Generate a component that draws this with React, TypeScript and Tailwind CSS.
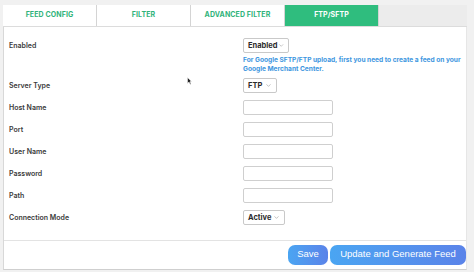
import { ChevronDown } from 'lucide-react';

const tabs = ['FEED CONFIG', 'FILTER', 'ADVANCED FILTER', 'FTP/SFTP'];

function Select({ value, width }: { value: string; width: string }) {
  return (
    <div
      className={`${width} h-[15px] flex items-center justify-between px-[4px] border border-[#c9c9c9] rounded-[2px] bg-white text-[7.5px] font-bold text-[#2c2c2c]`}
    >
      <span>{value}</span>
      <ChevronDown size={7} strokeWidth={1.5} className="text-[#777]" />
    </div>
  );
}

function Input() {
  return <div className="w-[90px] h-[15px] border border-[#cfcfcf] rounded-[2px] bg-white" />;
}

function Row({ label, children }: { label: string; children: React.ReactNode }) {
  return (
    <div className="flex h-[22px]">
      <div className="w-[239px] shrink-0 pl-[5px] pt-[4px] text-[7px] font-semibold text-[#3a3a3a]">{label}</div>
      <div className="pt-[1px]">{children}</div>
    </div>
  );
}

export default function App() {
  return (
    <div
      className="w-[474px] h-[272px] bg-[#f1f1f1] pt-[5px] pl-[3px] pr-[7px] relative"
      style={{ fontFamily: 'Inter, "Liberation Sans", sans-serif' }}
    >
      <div className="flex h-[22px] border-b border-[#dcdcdc]">
        {tabs.map((t, i) => (
          <div
            key={t}
            className={`w-[94px] flex items-center justify-center text-[7px] font-bold tracking-[0.1px] border-r border-[#d4d4d4] ${
              i === 3 ? 'bg-[#2fbd7e] text-white' : 'bg-white text-[#2fb37a]'
            }`}
          >
            {t}
          </div>
        ))}
        <div className="flex-1 bg-[#ececec]" />
      </div>

      <div className="bg-white border-l border-[#d8d8d8] border-r border-r-[#e6e6e6] border-b border-b-[#cfcfcf] h-[243px] flex flex-col">
        <div className="pt-[11px]">
          <div className="flex">
            <div className="w-[239px] shrink-0 pl-[5px] pt-[3px] text-[7px] font-semibold text-[#3a3a3a]">Enabled</div>
            <div>
              <Select value="Enabled" width="w-[46px]" />
              <div className="mt-[3px] text-[6.6px] leading-[9px] font-bold text-[#3d96e0] w-[222px]">
                For Google SFTP/FTP upload, first you need to create a feed on your Google Merchant Center.
              </div>
            </div>
          </div>
          <div className="h-[3px]" />
          <Row label="Server Type">
            <Select value="FTP" width="w-[34px]" />
          </Row>
          <Row label="Host Name">
            <Input />
          </Row>
          <Row label="Port">
            <Input />
          </Row>
          <Row label="User Name">
            <Input />
          </Row>
          <Row label="Password">
            <Input />
          </Row>
          <Row label="Path">
            <Input />
          </Row>
          <Row label="Connection Mode">
            <Select value="Active" width="w-[42px]" />
          </Row>
        </div>

        <div className="mt-auto border-t border-[#e3e3e3] h-[29px] flex items-center justify-end gap-[2px] pb-[1px]">
          <button className="h-[20px] w-[40px] rounded-[7px] bg-gradient-to-r from-[#4aa5f2] to-[#5a83e9] text-white text-[9.5px]" style={{ fontFamily: '"Liberation Sans", sans-serif' }}>
            Save
          </button>
          <button className="h-[20px] w-[136px] rounded-[7px] bg-gradient-to-r from-[#4aa5f2] to-[#5a83e9] text-white text-[9.5px]" style={{ fontFamily: '"Liberation Sans", sans-serif' }}>
            Update and Generate Feed
          </button>
        </div>
      </div>

      <svg className="absolute left-[187px] top-[77px]" width="5" height="8" viewBox="0 0 5 8">
        <path d="M0.5 0.5 L0.5 6.5 L2 5 L3.2 7.5 L4 7 L3 4.6 L4.6 4.6 Z" fill="#222" stroke="#fff" strokeWidth="0.5" />
      </svg>
    </div>
  );
}
